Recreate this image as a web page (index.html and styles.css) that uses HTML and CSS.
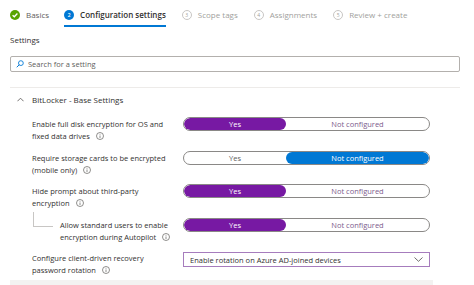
FILE: index.html
```html
<!DOCTYPE html>
<html lang="en">
<head>
    <meta charset="UTF-8">
    <title>Configuration settings</title>
    <link rel="stylesheet" href="styles.css">
</head>
<body>
    <!-- Wizard steps -->
    <nav class="steps">
        <div class="step done">
            <span class="step-icon">
                <svg width="10" height="10" viewBox="0 0 10 10"><circle cx="5" cy="5" r="5" fill="#57a300"/><path d="M2.6 5.2 L4.3 6.8 L7.4 3.5" fill="none" stroke="#fff" stroke-width="1.3"/></svg>
            </span>
            Basics
        </div>
        <div class="step active">
            <span class="step-num">2</span>
            Configuration settings
        </div>
        <div class="step"><span class="step-num">3</span>Scope tags</div>
        <div class="step"><span class="step-num">4</span>Assignments</div>
        <div class="step"><span class="step-num">5</span>Review + create</div>
    </nav>

    <div class="page">
        <h2 class="page-title">Settings</h2>

        <div class="search">
            <svg width="8" height="8" viewBox="0 0 9 9"><circle cx="5.5" cy="3.5" r="2.7" fill="none" stroke="#0078d4" stroke-width="1"/><path d="M3.6 5.4 L0.8 8.2" stroke="#0078d4" stroke-width="1.1"/></svg>
            <span>Search for a setting</span>
        </div>

        <section class="group">
            <div class="group-head">
                <svg width="7" height="5" viewBox="0 0 8 5"><path d="M0.5 4.5 L4 1 L7.5 4.5" fill="none" stroke="#605e5c" stroke-width="1"/></svg>
                BitLocker - Base Settings
            </div>

            <div class="setting">
                <div class="label">Enable full disk encryption for OS and fixed data drives<svg class="info" width="8" height="8" viewBox="0 0 8 8"><circle cx="4" cy="4" r="3.5" fill="none" stroke="#605e5c" stroke-width="0.7"/><path d="M4 3.5 V6" stroke="#605e5c" stroke-width="0.7"/><circle cx="4" cy="2.3" r="0.45" fill="#605e5c"/></svg></div>
                <div class="toggle">
                    <span class="opt on">Yes</span>
                    <span class="opt">Not configured</span>
                </div>
            </div>

            <div class="setting">
                <div class="label">Require storage cards to be encrypted (mobile only)<svg class="info" width="8" height="8" viewBox="0 0 8 8"><circle cx="4" cy="4" r="3.5" fill="none" stroke="#605e5c" stroke-width="0.7"/><path d="M4 3.5 V6" stroke="#605e5c" stroke-width="0.7"/><circle cx="4" cy="2.3" r="0.45" fill="#605e5c"/></svg></div>
                <div class="toggle">
                    <span class="opt">Yes</span>
                    <span class="opt on blue">Not configured</span>
                </div>
            </div>

            <div class="setting">
                <div class="label">Hide prompt about third-party encryption<svg class="info" width="8" height="8" viewBox="0 0 8 8"><circle cx="4" cy="4" r="3.5" fill="none" stroke="#605e5c" stroke-width="0.7"/><path d="M4 3.5 V6" stroke="#605e5c" stroke-width="0.7"/><circle cx="4" cy="2.3" r="0.45" fill="#605e5c"/></svg></div>
                <div class="toggle">
                    <span class="opt on">Yes</span>
                    <span class="opt">Not configured</span>
                </div>
            </div>

            <div class="setting child">
                <div class="label">Allow standard users to enable encryption during Autopilot<svg class="info" width="8" height="8" viewBox="0 0 8 8"><circle cx="4" cy="4" r="3.5" fill="none" stroke="#605e5c" stroke-width="0.7"/><path d="M4 3.5 V6" stroke="#605e5c" stroke-width="0.7"/><circle cx="4" cy="2.3" r="0.45" fill="#605e5c"/></svg></div>
                <div class="toggle">
                    <span class="opt on">Yes</span>
                    <span class="opt">Not configured</span>
                </div>
            </div>

            <div class="setting">
                <div class="label">Configure client-driven recovery password rotation<svg class="info" width="8" height="8" viewBox="0 0 8 8"><circle cx="4" cy="4" r="3.5" fill="none" stroke="#605e5c" stroke-width="0.7"/><path d="M4 3.5 V6" stroke="#605e5c" stroke-width="0.7"/><circle cx="4" cy="2.3" r="0.45" fill="#605e5c"/></svg></div>
                <div class="dropdown">
                    <span>Enable rotation on Azure AD-joined devices</span>
                    <svg width="9" height="5" viewBox="0 0 9 5"><path d="M0.5 0.5 L4.5 4.3 L8.5 0.5" fill="none" stroke="#605e5c" stroke-width="0.9"/></svg>
                </div>
            </div>
        </section>

        <div class="footer-band"></div>
    </div>
</body>
</html>
```

FILE: styles.css
```css
/* Reset */
* {
    margin: 0;
    padding: 0;
    box-sizing: border-box;
}

body {
    font-family: 'Open Sans', 'Noto Sans', sans-serif;
    font-size: 7.5px;
    color: #323130;
    background: #fff;
    width: 474px;
    height: 285px;
    overflow: hidden;
}

/* Wizard steps */
.steps {
    display: flex;
    align-items: center;
    height: 27px;
    padding: 2px 0 0 10px;
}

.step {
    display: flex;
    align-items: center;
    gap: 6px;
    height: 25px;
    margin-right: 16px;
    color: #a19f9d;
    font-size: 8px;
}

.step.done {
    color: #605e5c;
    margin-right: 15px;
}

.step.active {
    color: #323130;
    font-weight: 600;
    border-bottom: 2px solid #0078d4;
    padding-top: 2px;
}

.step-icon {
    display: flex;
}

.step-num {
    display: inline-flex;
    align-items: center;
    justify-content: center;
    width: 10px;
    height: 10px;
    border: 1px solid #c8c6c4;
    border-radius: 50%;
    font-size: 5px;
    font-weight: 400;
    color: #a19f9d;
}

.step.active .step-num {
    border: none;
    background: #0078d4;
    color: #fff;
    font-weight: 600;
}

/* Page */
.page {
    padding: 0 14px 0 10px;
}

.page-title {
    font-size: 8px;
    font-weight: 400;
    color: #323130;
    margin-top: 7px;
    height: 22px;
}

.search {
    display: flex;
    align-items: center;
    gap: 4px;
    height: 16px;
    padding-left: 5px;
    border: 1px solid #b3b0ad;
    border-radius: 2px;
    color: #605e5c;
    font-size: 7.5px;
}

/* Setting group */
.group {
    margin-top: 15px;
    border-top: 1px solid #edebe9;
    padding-top: 2px;
}

.group-head {
    display: flex;
    align-items: center;
    gap: 8px;
    height: 20px;
    padding: 0 0 2px 7px;
    font-size: 8px;
    color: #323130;
}

.setting {
    display: flex;
    align-items: flex-start;
    padding: 8px 0 0 22px;
    height: 33.5px;
}

.setting.child {
    position: relative;
    padding-left: 50px;
}

/* tree connector to the parent setting */
.setting.child::before {
    content: '';
    position: absolute;
    left: 23px;
    top: 1px;
    width: 19px;
    height: 14px;
    border-left: 1px solid #c8c6c4;
    border-bottom: 1px solid #c8c6c4;
}

.label {
    width: 140px;
    margin-right: 11px;
    line-height: 12px;
    color: #323130;
}

.setting.child .label {
    width: 112px;
}

.info {
    margin-left: 6px;
    vertical-align: -1px;
}

.toggle {
    display: flex;
    width: 247px;
    height: 14px;
    border: 1px solid #8a8886;
    border-radius: 7px;
    overflow: hidden;
    margin-top: -1px;
}

.opt {
    display: flex;
    align-items: center;
    justify-content: center;
    color: #7c5b8d;
}

.opt:first-child {
    width: 102px;
    color: #605e5c;
}

.opt:last-child {
    flex: 1;
}

.opt.on {
    background: #7719a3;
    color: #fff;
    border-radius: 7px;
}

.opt.on.blue {
    background: #0078d4;
}

.dropdown {
    display: flex;
    align-items: center;
    justify-content: space-between;
    width: 247px;
    height: 15px;
    padding: 0 6px 0 6px;
    border: 1px solid #a67cbd;
    color: #323130;
}

.footer-band {
    height: 6px;
    margin: 2px 27px 0 0;
    background: #f3f2f1;
}
```
